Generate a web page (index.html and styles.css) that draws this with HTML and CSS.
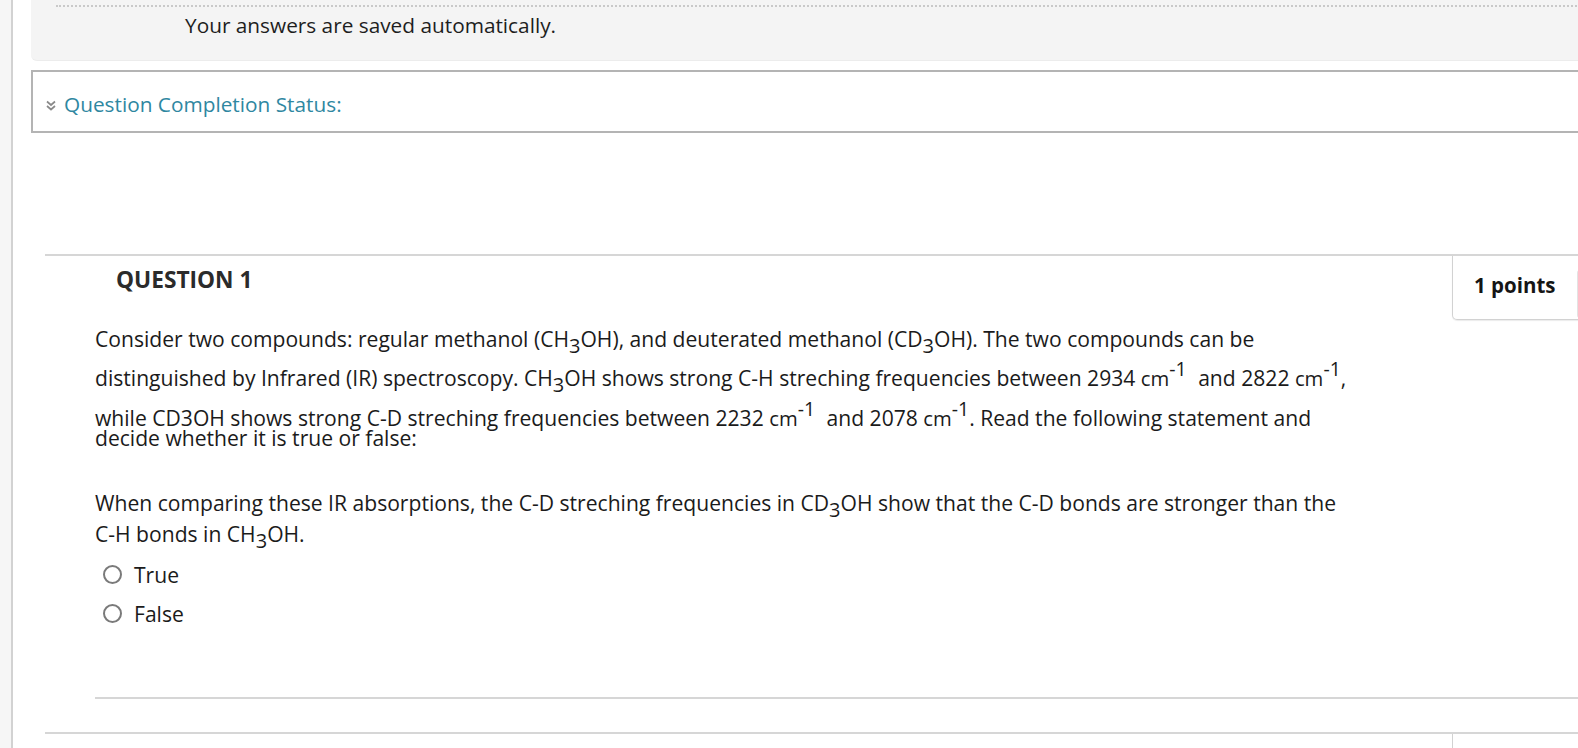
FILE: index.html
```html
<!DOCTYPE html>
<html lang="en">
<head>
<meta charset="utf-8">
<title>Question</title>
<link rel="stylesheet" href="styles.css">
</head>
<body>
<div class="page">
  <div class="rail"></div>
  <div class="main">
    <div class="saved">
      <div class="dots"></div>
      <p class="saved-text">Your answers are saved automatically.</p>
    </div>
    <div class="status">
      <svg class="chev" width="10" height="11" viewBox="0 0 10 11"><path d="M1 1.5 L5 5 L9 1.5 M1 6 L5 9.5 L9 6" fill="none" stroke="#8a8a8a" stroke-width="1.7"/></svg>
      <span class="status-link">Question Completion Status:</span>
    </div>

    <div class="question">
      <div class="q-head">
        <h3 class="q-title">QUESTION 1</h3>
        <div class="points"><span>1 points</span><span class="flag"></span></div>
      </div>
      <div class="q-body">
        <div class="stem1">
          <div class="ln">Consider two compounds: regular methanol (CH<sub>3</sub>OH), and deuterated methanol (CD<sub>3</sub>OH). The two compounds can be</div>
          <div class="ln gap">distinguished by Infrared (IR) spectroscopy. CH<sub>3</sub>OH shows strong C-H streching frequencies between 2934 <span class="unit">cm<sup class="wide">-1</sup></span> and 2822 <span class="unit">cm<sup>-1</sup></span>,</div>
          <div class="ln gap">while CD3OH shows strong C-D streching frequencies between 2232 <span class="unit">cm<sup class="wide">-1</sup></span> and 2078 <span class="unit">cm<sup>-1</sup></span>. Read the following statement and</div>
          <div class="ln">decide whether it is true or false:</div>
        </div>
        <div class="stem2">
          <div class="ln2">When comparing these IR absorptions, the C-D streching frequencies in CD<sub>3</sub>OH show that the C-D bonds are stronger than the</div>
          <div class="ln2">C-H bonds in CH<sub>3</sub>OH.</div>
        </div>
        <ul class="options">
          <li><span class="radio"></span>True</li>
          <li><span class="radio"></span>False</li>
        </ul>
        <div class="q-foot"></div>
      </div>
    </div>

    <div class="question next">
      <div class="q-head">
        <div class="q-title"></div>
        <div class="points empty"></div>
      </div>
    </div>
  </div>
</div>
</body>
</html>
```
FILE: styles.css
```css
html, body {
  margin: 0;
  padding: 0;
  overflow: hidden;
  background: #fff;
}
body {
  font-family: "Open Sans", "Noto Sans", sans-serif;
  color: #1f1f1f;
}
.page {
  display: flex;
  width: 1640px;
  height: 748px;
}
.rail {
  width: 11px;
  flex: none;
  background: #f6f6f6;
  border-right: 2px solid #d2d2d2;
}
.main {
  flex: 1;
  padding-left: 18px;
}
.saved {
  height: 61px;
  background: #f4f4f4;
  border-radius: 0 0 0 6px;
  border-bottom: 1px solid #ececec;
  padding-top: 5px;
  box-sizing: border-box;
}
.dots {
  margin-left: 25px;
  border-top: 2px dotted #c9c9c9;
}
.saved-text {
  margin: 4px 0 0 154px;
  font-size: 20.8px;
  line-height: 28px;
  color: #1e1e1e;
}
.status {
  margin-top: 9px;
  height: 63px;
  box-sizing: border-box;
  border: 2px solid #b4b4b4;
  padding: 18px 0 0 13px;
  display: flex;
  align-items: flex-start;
}
.chev {
  margin-top: 10px;
  margin-right: 8px;
}
.status-link {
  font-size: 20.8px;
  line-height: 28px;
  color: #2f87a1;
}
.question {
  margin-top: 121px;
  margin-left: 14px;
  border-top: 2px solid #d6d6d6;
}
.q-head {
  display: flex;
  justify-content: space-between;
  align-items: flex-start;
}
.q-title {
  margin: 8px 0 0 71px;
  font-size: 22.7px;
  line-height: 32px;
  font-weight: 700;
  color: #2b2b2b;
}
.points {
  margin-right: 15px;
  width: 173px;
  height: 64px;
  box-sizing: border-box;
  border: 1px solid #d2d2d2;
  border-top: 0;
  border-radius: 0 0 0 5px;
  box-shadow: 0 1px 1px rgba(0,0,0,0.08);
  padding: 14px 0 0 21px;
  display: flex;
  align-items: flex-start;
  font-size: 20.5px;
  line-height: 30px;
  font-weight: 700;
  color: #151515;
}
.flag {
  width: 12px;
  height: 48px;
  margin-left: 21px;
  background: #e3e3e3;
  border-radius: 3px 0 0 3px;
}
.q-body {
  padding-left: 50px;
}
.stem1 {
  margin-top: 9px;
  font-size: 21.1px;
  color: #1b1b1b;
}
.ln {
  line-height: 19px;
  white-space: nowrap;
}
.ln.gap {
  margin-top: 20px;
}
sub, sup {
  line-height: 0;
  position: relative;
  vertical-align: baseline;
}
sub {
  font-size: 0.95em;
  top: 0.3em;
}
sup {
  font-size: 0.96em;
  top: -0.5em;
}
sup.wide {
  padding-right: 6px;
}
.unit {
  font-size: 0.96em;
}
.stem2 {
  margin-top: 40px;
  font-size: 21.1px;
  color: #1b1b1b;
}
.ln2 {
  line-height: 31px;
  white-space: nowrap;
}
.options {
  list-style: none;
  margin: 6px 0 0 0;
  padding: 0 0 0 8px;
  font-size: 21.1px;
  color: #1b1b1b;
}
.options li {
  display: flex;
  align-items: center;
  height: 39px;
}
.radio {
  width: 15px;
  height: 15px;
  border: 2px solid #7a7a7a;
  border-radius: 50%;
  margin-right: 12px;
  background: #fff;
}
.q-foot {
  margin-top: 64px;
  border-top: 2px solid #d6d6d6;
}
.question.next {
  margin-top: 33px;
}
.points.empty {
  height: 40px;
  box-shadow: none;
  border-bottom: 0;
}
```
